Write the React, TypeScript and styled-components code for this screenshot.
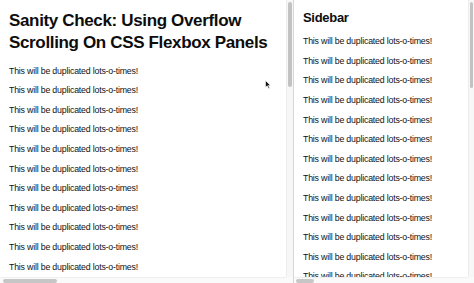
import React from "react";
import styled, { createGlobalStyle } from "styled-components";

const GlobalStyle = createGlobalStyle`
  html, body { margin: 0; padding: 0; background: #ffffff; }
  body { font-family: "Liberation Sans", Arial, Helvetica, sans-serif; color: #1c1c1c; }
`;

const Page = styled.div`
  position: relative;
  display: flex;
  width: 474px;
  height: 283px;
  overflow: hidden;
  background: #ffffff;
`;

const Pane = styled.section<{ $width: number; $bar: number; $divider?: boolean }>`
  display: grid;
  grid-template-columns: 1fr ${(p) => p.$bar}px;
  grid-template-rows: 1fr 6px;
  width: ${(p) => p.$width}px;
  height: 283px;
  flex: none;
  box-sizing: border-box;
  border-right: ${(p) => (p.$divider ? "1px solid #d6d6d6" : "none")};
`;

const Content = styled.div`
  overflow: hidden;
  padding: 0 9px;
  min-width: 0;
`;

const Title = styled.h1`
  margin: 9.5px 0 11px;
  font-size: 17px;
  line-height: 22.6px;
  font-weight: 700;
  letter-spacing: -0.35px;
  color: #0d0d0d;
`;

const SideTitle = styled.h2`
  margin: 10.3px 0 11px;
  font-size: 13px;
  line-height: 15px;
  font-weight: 700;
  letter-spacing: -0.3px;
  color: #0d0d0d;
`;

const Line = styled.p`
  margin: 9px 0;
  font-size: 8.8px;
  line-height: 10.6px;
  letter-spacing: -0.2px;
  white-space: nowrap;
  color: #111;
`;

const VTrack = styled.div`
  display: flex;
  flex-direction: column;
  align-items: center;
  padding-top: 2px;
  background: #f7f7f7;
  border-left: 1px solid #ececec;
  box-sizing: border-box;
`;

const VThumb = styled.div<{ $len: number }>`
  width: 3.5px;
  height: ${(p) => p.$len}px;
  border-radius: 2px;
  background: #c2c2c2;
`;

const HTrack = styled.div<{ $offset: number }>`
  display: flex;
  align-items: center;
  padding-left: ${(p) => p.$offset}px;
  background: #fafafa;
  border-top: 1px solid #efefef;
  box-sizing: border-box;
`;

const HThumb = styled.div<{ $len: number }>`
  width: ${(p) => p.$len}px;
  height: 4px;
  border-radius: 2px;
  background: #c6c6c6;
`;

const Corner = styled.div`
  background: #fafafa;
`;

const Cursor = styled.svg`
  position: absolute;
  left: 265px;
  top: 80px;
  width: 6px;
  height: 9px;
  pointer-events: none;
`;

const TEXT = "This will be duplicated lots-o-times!";

export default function App() {
  const mainLines = Array.from({ length: 11 }, (_, i) => i);
  const sideLines = Array.from({ length: 13 }, (_, i) => i);
  return (
    <>
      <GlobalStyle />
      <Page>
        <Pane $width={294} $bar={7} $divider>
          <Content>
            <Title>Sanity Check: Using Overflow Scrolling On CSS Flexbox Panels</Title>
            {mainLines.map((i) => (
              <Line key={i}>{TEXT}</Line>
            ))}
          </Content>
          <VTrack>
            <VThumb $len={85} />
          </VTrack>
          <HTrack $offset={3}>
            <HThumb $len={54} />
          </HTrack>
          <Corner />
        </Pane>
        <Pane $width={180} $bar={6}>
          <Content>
            <SideTitle>Sidebar</SideTitle>
            {sideLines.map((i) => (
              <Line key={i}>{TEXT}</Line>
            ))}
          </Content>
          <VTrack>
            <VThumb $len={86} />
          </VTrack>
          <HTrack $offset={2}>
            <HThumb $len={18} />
          </HTrack>
          <Corner />
        </Pane>
        <Cursor viewBox="0 0 6 9">
          <path d="M0.5 0.5 L0.5 7.5 L2.2 5.8 L3.5 8.5 L4.5 8 L3.3 5.4 L5.5 5.4 Z" fill="#111" stroke="#fff" strokeWidth="0.6" />
        </Cursor>
      </Page>
    </>
  );
}
